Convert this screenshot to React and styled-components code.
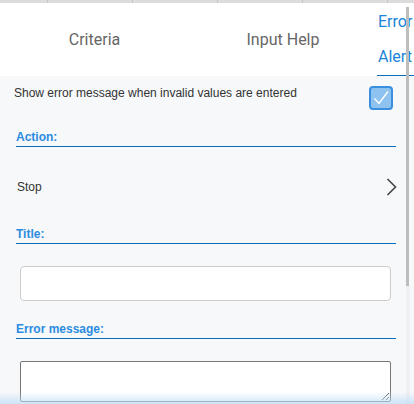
import React, { useState } from "react";
import styled, { createGlobalStyle } from "styled-components";

const GlobalStyle = createGlobalStyle`
  html, body {
    margin: 0;
    padding: 0;
    background: #ffffff;
  }
  body {
    font-family: "Liberation Sans", Arial, sans-serif;
    overflow: hidden;
  }
`;

const Page = styled.div`
  position: relative;
  width: 414px;
  height: 404px;
  overflow: hidden;
  background: #f7f8fa;
`;

const TopStrip = styled.div`
  display: flex;
  height: 3px;
  background: #dcdcdc;
`;

const StripCell = styled.div`
  flex: 0 0 ${(p) => p.w}px;
  border-right: 1px solid #c4c4c4;
  box-sizing: border-box;
`;

const TabBar = styled.div`
  display: flex;
  height: 73px;
  background: #ffffff;
`;

const Tab = styled.button`
  flex: 0 0 ${(p) => p.w}px;
  box-sizing: border-box;
  border: none;
  background: transparent;
  padding: 0;
  display: flex;
  align-items: center;
  justify-content: ${(p) => (p.narrow ? "flex-start" : "center")};
  font-family: Roboto, "Liberation Sans", sans-serif;
  font-size: 16px;
  line-height: 35px;
  text-align: left;
  color: ${(p) => (p.active ? "#1a84d8" : "#666666")};
  border-bottom: ${(p) => (p.active ? "1.5px solid #0a6ebd" : "none")};
  padding-left: ${(p) => (p.narrow ? "1px" : "0")};
  overflow: hidden;
  white-space: normal;
  cursor: pointer;
`;

const Content = styled.div`
  display: flex;
  flex-direction: column;
`;

const OptionRow = styled.div`
  display: flex;
  justify-content: space-between;
  align-items: flex-start;
  padding: 10px 21px 0 14px;
`;

const OptionText = styled.span`
  font-size: 12px;
  line-height: 14px;
  color: #333333;
`;

const CheckBox = styled.button`
  width: 24px;
  height: 24px;
  box-sizing: border-box;
  padding: 0;
  border: 2px solid #3a8fe0;
  border-radius: 4px;
  background: ${(p) => (p.checked ? "#8ec3f0" : "#ffffff")};
  display: flex;
  align-items: center;
  justify-content: center;
  cursor: pointer;
`;

const SectionLabel = styled.div`
  margin: ${(p) => p.top}px 18px 0 16px;
  padding-bottom: 2px;
  border-bottom: 1.5px solid #0a6ebd;
  font-size: 12px;
  line-height: 14px;
  font-weight: bold;
  color: #2b8ce0;
`;

const SelectRow = styled.div`
  display: flex;
  align-items: center;
  justify-content: space-between;
  height: 80px;
  padding: 0 17px 0 17px;
  font-size: 12px;
  color: #333333;
  cursor: pointer;
`;

const TextInput = styled.input`
  box-sizing: border-box;
  margin: 22px 23px 0 20px;
  height: 35px;
  border: 1px solid #cccccc;
  border-radius: 4px;
  background: #ffffff;
  font-size: 12px;
  padding: 0 8px;
  outline: none;
`;

const TextArea = styled.textarea`
  box-sizing: border-box;
  margin: 22px 23px 0 20px;
  height: 41px;
  border: 1px solid #767676;
  border-radius: 2px;
  background: #ffffff;
  font-size: 12px;
  font-family: "Liberation Sans", Arial, sans-serif;
  padding: 4px 6px;
  outline: none;
`;

const ScrollThumb = styled.div`
  position: absolute;
  left: 406px;
  top: 7px;
  width: 3px;
  height: 279px;
  background: #bdbdbd;
`;

const ScrollTrack = styled.div`
  position: absolute;
  left: 406px;
  top: 286px;
  width: 4px;
  bottom: 0;
  background: #eef0f2;
`;

const BottomGlow = styled.div`
  position: absolute;
  left: 0;
  right: 0;
  bottom: 0;
  height: 12px;
  background: linear-gradient(
    to bottom,
    rgba(200, 225, 248, 0) 0%,
    rgba(190, 220, 246, 0.75) 100%
  );
  pointer-events: none;
`;

export default function App() {
  const [checked, setChecked] = useState(true);

  return (
    <>
      <GlobalStyle />
      <Page>
        <TopStrip>
          <StripCell w={48} />
          <StripCell w={85} />
          <StripCell w={85} />
          <StripCell w={85} />
          <StripCell w={85} />
        </TopStrip>
        <TabBar>
          <Tab w={189}>Criteria</Tab>
          <Tab w={188}>Input Help</Tab>
          <Tab w={37} narrow active>
            Error Alert
          </Tab>
        </TabBar>
        <Content>
          <OptionRow>
            <OptionText>
              Show error message when invalid values are entered
            </OptionText>
            <CheckBox checked={checked} onClick={() => setChecked(!checked)}>
              {checked && (
                <svg width="18" height="18" viewBox="0 0 18 18">
                  <path
                    d="M2.5 9.5 L7 14.5 L16 2.5"
                    fill="none"
                    stroke="#ffffff"
                    strokeWidth="1.4"
                  />
                </svg>
              )}
            </CheckBox>
          </OptionRow>

          <SectionLabel top={20}>Action:</SectionLabel>
          <SelectRow>
            <span>Stop</span>
            <svg width="11" height="18" viewBox="0 0 11 18">
              <path
                d="M1.5 1 L9.5 9 L1.5 17"
                fill="none"
                stroke="#444444"
                strokeWidth="1.6"
              />
            </svg>
          </SelectRow>

          <SectionLabel top={0}>Title:</SectionLabel>
          <TextInput type="text" />

          <SectionLabel top={21}>Error message:</SectionLabel>
          <TextArea />
        </Content>
        <ScrollThumb />
        <ScrollTrack />
        <BottomGlow />
      </Page>
    </>
  );
}
